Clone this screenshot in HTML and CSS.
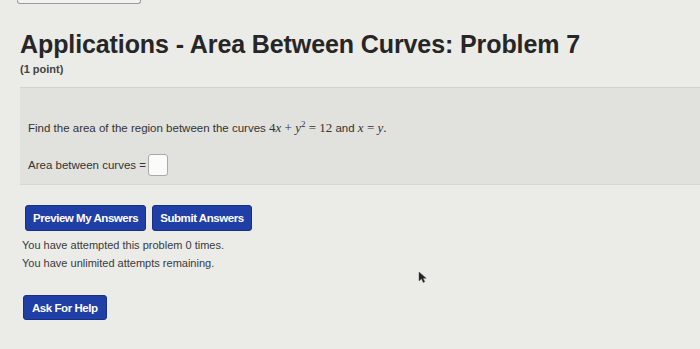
FILE: index.html
```html
<!DOCTYPE html>
<html>
  <head>
    <title>Area Between Curves: Problem 7</title>
    <meta charset="UTF-8" />
    <link rel="stylesheet" href="styles.css">
  </head>

  <body>
    <div class="topBox"></div>

    <div class="header">
      <h1 class="title">Applications - Area Between Curves: Problem 7</h1>
      <p class="points">(1 point)</p>
    </div>

    <div class="problem">
      <p class="question">
        Find the area of the region between the curves
        <span class="math">4<i>x</i> + <i>y</i><sup>2</sup> = 12</span>
        and
        <span class="math"><i>x</i> = <i>y</i>.</span>
      </p>
      <p class="answerLine">
        Area between curves =
        <input class="answer" type="text">
      </p>
    </div>

    <div class="actions">
      <button class="btn">Preview My Answers</button>
      <button class="btn">Submit Answers</button>
    </div>

    <div class="attempts">
      <p>You have attempted this problem 0 times.</p>
      <p>You have unlimited attempts remaining.</p>
    </div>

    <div class="help">
      <button class="btn">Ask For Help</button>
    </div>

    <svg class="cursor" width="9" height="12" viewBox="0 0 9 12">
      <path d="M1 1 L1 10 L3.5 7.8 L5.2 11.5 L6.8 10.8 L5.1 7.2 L8.2 7.2 Z" fill="#222" stroke="#555" stroke-width="0.5"/>
    </svg>
  </body>
</html>
```

FILE: styles.css
```css
html * {
  margin: 0;
  padding: 0;
}

body {
  font-family: "Liberation Sans", Arial, sans-serif;
  background-color: #ebebe8;
  color: #333;
  position: relative;
  height: 349px;
  overflow: hidden;
}

.topBox {
  width: 122px;
  height: 3px;
  margin-left: 17px;
  background-color: #f2f2f0;
  border: 1px solid #9c9c9a;
  border-top: none;
  border-radius: 0 0 3px 3px;
}

.header {
  padding: 26px 0 0 20px;
}

.title {
  font-size: 25px;
  font-weight: bold;
  color: #262626;
  letter-spacing: -0.1px;
}

.points {
  font-size: 11px;
  font-weight: bold;
  color: #444;
  margin-top: 4px;
}

.problem {
  margin: 12px 0 0 20px;
  height: 96px;
  background-color: #e1e1de;
  border-top: 1px solid #d2d2cf;
  border-bottom: 1px solid #d6d6d3;
  padding: 0 0 0 8px;
}

.question {
  font-size: 11.5px;
  color: #333;
  padding-top: 32px;
}

.math {
  font-family: "Liberation Serif", "Times New Roman", serif;
  font-size: 13px;
}

.math sup {
  font-size: 9px;
  line-height: 0;
}

.answerLine {
  font-size: 11.5px;
  color: #333;
  margin-top: 18px;
  display: flex;
  align-items: center;
  gap: 0;
}

.answer {
  width: 18px;
  height: 20px;
  margin-left: 2px;
  background-color: #fbfbfa;
  border: 1px solid #a9a9a7;
  border-radius: 3px;
  outline: none;
}

.actions {
  display: flex;
  gap: 6px;
  padding: 20px 0 0 25px;
}

.btn {
  background-color: #1f3ea6;
  color: white;
  font-family: "Liberation Sans", Arial, sans-serif;
  font-size: 11.5px;
  font-weight: bold;
  border: 1px solid #17307f;
  border-radius: 3px;
  padding: 0 7px;
  height: 26px;
  letter-spacing: -0.45px;
}

.attempts {
  padding: 5px 0 0 22px;
  font-size: 11px;
  line-height: 18px;
  color: #3a3a3a;
}

.help {
  padding: 23px 0 0 23px;
}

.help .btn {
  height: 25px;
  padding: 0 8px;
}

.cursor {
  position: absolute;
  left: 418px;
  top: 271px;
}
```
